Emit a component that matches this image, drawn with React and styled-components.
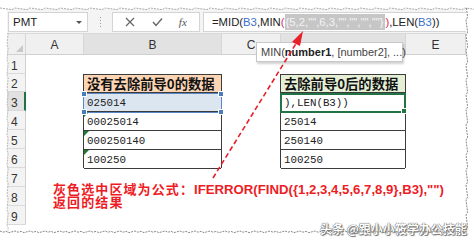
import React from "react";
import styled, { createGlobalStyle } from "styled-components";

const Global = createGlobalStyle`
  html, body { margin: 0; padding: 0; background: #fff; }
  #root { width: 474px; height: 242px; }
`;

const Frame = styled.div`
  position: relative;
  width: 474px;
  height: 242px;
  background: #fff;
  overflow: hidden;
  font-family: "Liberation Sans", Arial, sans-serif;
`;

const Sheet = styled.div`
  position: absolute;
  left: 7px;
  top: 9px;
  width: 459px;
  height: 222px;
  background: #fff;
  display: flex;
  flex-direction: column;
  overflow: hidden;
`;

const FormulaBar = styled.div`
  height: 24px;
  box-sizing: border-box;
  padding: 3px 0 1px 1px;
  display: flex;
  align-items: stretch;
  background: #f4f4f4;
`;

const NameBox = styled.div`
  width: 80px;
  box-sizing: border-box;
  border: 1px solid #d4d4d4;
  background: #fff;
  display: flex;
  align-items: center;
  justify-content: space-between;
  padding: 0 5px 0 4px;
  font-size: 11.5px;
  color: #222;
`;

const Caret = styled.span`
  width: 0;
  height: 0;
  border-left: 3px solid transparent;
  border-right: 3px solid transparent;
  border-top: 3px solid #555;
`;

const Grip = styled.div`
  width: 24px;
  display: flex;
  flex-direction: column;
  align-items: center;
  justify-content: center;
  gap: 2px;
  & > i {
    width: 1px;
    height: 1px;
    background: #999;
  }
`;

const Buttons = styled.div`
  width: 88px;
  box-sizing: border-box;
  border: 1px solid #d4d4d4;
  background: #fff;
  display: flex;
  align-items: center;
  justify-content: space-around;
  padding: 0 4px;
  color: #666;
`;

const Fx = styled.span`
  font-family: "Liberation Serif", serif;
  font-style: italic;
  font-size: 11px;
  color: #555;
`;

const FormulaInput = styled.div`
  flex: 1;
  margin-left: 3px;
  box-sizing: border-box;
  border: 1px solid #d4d4d4;
  border-right: none;
  background: #fff;
  display: flex;
  align-items: center;
  padding-left: 8px;
  font-size: 11.3px;
  white-space: pre;
  color: #222;
`;

const Tok = styled.span`
  color: ${(p) => p.$c || "#222"};
`;

const Hl = styled.span`
  background: #c6c6c6;
  color: #f4f4f4;
  padding: 2px 2px 2px 1px;
`;

const ColHeader = styled.div`
  display: grid;
  grid-template-columns: 19px 58px 138px 59px 125px 1fr;
  height: 22px;
  background: #f0f0f0;
  border-top: 1px solid #dadada;
  border-bottom: 1px solid #d0d0d0;
  box-sizing: border-box;
`;

const ColCell = styled.div`
  display: flex;
  align-items: flex-end;
  justify-content: center;
  padding-bottom: 2px;
  font-size: 12px;
  color: #333;
  border-right: 1px solid #d6d6d6;
  background: ${(p) => (p.$sel ? "#e2e2e2" : "transparent")};
  position: relative;
  &::after {
    content: "";
    position: absolute;
    right: 2px;
    bottom: 2px;
    border-left: 7px solid transparent;
    border-bottom: 7px solid ${(p) => (p.$corner ? "#c8c8c8" : "transparent")};
  }
`;

const Body = styled.div`
  flex: 1;
  display: grid;
  grid-template-columns: 19px 58px 138px 59px 125px 1fr;
  grid-template-rows: 19px 18px 19px 19px 19px 19px 19px 19px 19px 1fr;
`;

const RowHead = styled.div`
  grid-column: 1;
  grid-row: ${(p) => p.$r};
  background: ${(p) => (p.$sel ? "#e1e1e1" : "#f3f3f3")};
  border-bottom: 1px solid #dadada;
  border-right: ${(p) => (p.$sel ? "2px solid #217346" : "1px solid #d0d0d0")};
  box-sizing: border-box;
  display: flex;
  align-items: flex-end;
  padding: 0 0 1px 4px;
  font-size: 12px;
  line-height: 12px;
  color: #333;
`;

const Table = styled.div`
  grid-column: ${(p) => p.$col};
  grid-row: 2 / 7;
  display: grid;
  grid-template-rows: 18px 19px 19px 19px 19px;
  border: 1px solid #3c3c3c;
  border-bottom: none;
  margin-left: -1px;
  position: relative;
`;

const HeadCell = styled.div`
  background: ${(p) => p.$bg};
  border-bottom: 1px solid #3c3c3c;
  display: flex;
  align-items: center;
  padding-left: 3px;
  font-family: "Noto Sans CJK SC", sans-serif;
  font-weight: 700;
  font-size: 13.3px;
  line-height: 1;
  color: #111;
  white-space: nowrap;
  overflow: hidden;
`;

const Cell = styled.div`
  position: relative;
  background: ${(p) => (p.$sel ? "#dce6f1" : "#fff")};
  border-bottom: 1px solid #3c3c3c;
  display: flex;
  align-items: flex-end;
  padding: 0 0 2px 3px;
  font-family: "Liberation Mono", monospace;
  font-size: 10.8px;
  color: #222;
  white-space: nowrap;
  &::before {
    content: "";
    position: absolute;
    left: 0;
    top: 0;
    border-top: 5px solid ${(p) => (p.$flag ? "#1e7b34" : "transparent")};
    border-right: 5px solid transparent;
  }
`;

const SelBox = styled.div`
  position: absolute;
  left: -1px;
  right: -1px;
  top: 18px;
  height: 20px;
  box-sizing: border-box;
  border: ${(p) => (p.$green ? "2px solid #217346" : "1px solid #5b87c5")};
  pointer-events: none;
`;

const Handle = styled.span`
  position: absolute;
  width: 4px;
  height: 4px;
  background: ${(p) => p.$c};
  border: 1px solid #fff;
  ${(p) => p.$pos}
`;

const Note = styled.div`
  grid-column: 2 / 7;
  grid-row: 7 / 10;
  align-self: start;
  padding: 14px 0 0 27px;
  color: #ee1c25;
  font-family: "Noto Sans CJK SC", sans-serif;
  font-weight: 700;
  font-size: 13px;
  letter-spacing: 1.1px;
  white-space: nowrap;
`;

const NoteLine = styled.div`
  height: 13px;
  line-height: 13px;
`;

const Latin = styled.span`
  font-family: "Liberation Sans", Arial, sans-serif;
  font-size: 13.2px;
  letter-spacing: 0;
`;

const Tooltip = styled.div`
  position: absolute;
  left: 256px;
  top: 42px;
  width: 147px;
  height: 20px;
  box-sizing: border-box;
  background: #fff;
  border: 1px solid #c8c8c8;
  box-shadow: 1px 2px 2px rgba(0, 0, 0, 0.18);
  display: flex;
  align-items: center;
  padding-left: 4px;
  font-size: 11px;
  color: #444;
  white-space: pre;
  & b {
    color: #222;
  }
`;

const Watermark = styled.div`
  position: absolute;
  left: 320px;
  top: 220px;
  font-family: "Noto Sans CJK SC", sans-serif;
  font-size: 12px;
  font-weight: 700;
  color: #fff;
  white-space: pre;
  text-shadow: 0 0 1px #555, 0 0 1px #555, 1px 1px 1px #777;
`;

const Overlay = styled.svg`
  position: absolute;
  left: 0;
  top: 0;
  pointer-events: none;
`;

function TornEdges() {
  const top = [];
  for (let x = 0; x <= 474; x += 3) top.push(`${x},${8 + ((x * 7) % 5) * 0.4}`);
  const bottom = [];
  for (let x = 0; x <= 466; x += 3) bottom.push(`${x},${231 + ((x * 11) % 5) * 0.4}`);
  const right = [];
  for (let y = 8; y <= 232; y += 3) right.push(`${466 + ((y * 7) % 5) * 0.4},${y}`);
  const left = [];
  for (let y = 33; y <= 232; y += 3) left.push(`${7 + ((y * 13) % 5) * 0.3},${y}`);
  return (
    <Overlay width="474" height="242">
      <polyline points={top.join(" ")} fill="none" stroke="#aaa" strokeWidth="1" strokeDasharray="2 1" />
      <polyline points={bottom.join(" ")} fill="none" stroke="#888" strokeWidth="1" strokeDasharray="2 1" />
      <polyline points={right.join(" ")} fill="none" stroke="#888" strokeWidth="1" strokeDasharray="2 1" />
      <polyline points={left.join(" ")} fill="none" stroke="#bbb" strokeWidth="1" strokeDasharray="2 1" />
    </Overlay>
  );
}

function Arrow() {
  return (
    <Overlay width="474" height="242">
      <line x1="213" y1="178" x2="297" y2="42" stroke="#e8202a" strokeWidth="1.6" strokeDasharray="5 3" />
      <polygon points="303,31 292,42 300,46" fill="#e8202a" />
    </Overlay>
  );
}

const rows = [1, 2, 3, 4, 5, 6, 7, 8, 9];

export default function App() {
  const hTopLeft = "left:-3px; top:-3px;";
  const hBotLeft = "left:-3px; bottom:-3px;";
  const hTopRight = "right:-3px; top:-3px;";
  const hBotRight = "right:-3px; bottom:-3px;";
  return (
    <>
      <Global />
      <Frame>
        <Sheet>
          <FormulaBar>
            <NameBox>
              <span>PMT</span>
              <Caret />
            </NameBox>
            <Grip>
              <i />
              <i />
              <i />
              <i />
            </Grip>
            <Buttons>
              <svg width="10" height="10" viewBox="0 0 10 10">
                <path d="M1 1 L9 9 M9 1 L1 9" stroke="#666" strokeWidth="1.2" />
              </svg>
              <svg width="11" height="10" viewBox="0 0 11 10">
                <path d="M1 5 L4 8.5 L10 1.5" stroke="#666" strokeWidth="1.4" fill="none" />
              </svg>
              <Fx>fx</Fx>
            </Buttons>
            <FormulaInput>
              <Tok>=MID(</Tok>
              <Tok $c="#3b6fc4">B3</Tok>
              <Tok>,MIN</Tok>
              <Tok $c="#d0306a">(</Tok>
              <Hl>{'{5,2,"",6,3,"","","",""}'}</Hl>
              <Tok $c="#d0306a">)</Tok>
              <Tok>,LEN(</Tok>
              <Tok $c="#3b6fc4">B3</Tok>
              <Tok>))</Tok>
            </FormulaInput>
          </FormulaBar>
          <ColHeader>
            <ColCell $corner />
            <ColCell>A</ColCell>
            <ColCell $sel>B</ColCell>
            <ColCell>C</ColCell>
            <ColCell $sel />
            <ColCell>E</ColCell>
          </ColHeader>
          <Body>
            {rows.map((r) => (
              <RowHead key={r} $r={r} $sel={r === 3}>
                {r}
              </RowHead>
            ))}
            <Table $col={3}>
              <HeadCell $bg="#fcd5b4">没有去除前导0的数据</HeadCell>
              <Cell $sel>025014</Cell>
              <Cell $flag>00025014</Cell>
              <Cell $flag>000250140</Cell>
              <Cell $flag>100250</Cell>
              <SelBox>
                <Handle $c="#4a7ebb" $pos={hTopLeft} />
                <Handle $c="#4a7ebb" $pos={hBotLeft} />
                <Handle $c="#4a7ebb" $pos={hTopRight} />
                <Handle $c="#4a7ebb" $pos={hBotRight} />
              </SelBox>
            </Table>
            <Table $col={5}>
              <HeadCell $bg="#e4efd6">去除前导0后的数据</HeadCell>
              <Cell>),LEN(B3))</Cell>
              <Cell>25014</Cell>
              <Cell>250140</Cell>
              <Cell>100250</Cell>
              <SelBox $green>
                <Handle $c="#217346" $pos={hBotRight} />
              </SelBox>
            </Table>
            <Note>
              <NoteLine>
                灰色选中区域为公式：<Latin>IFERROR(FIND({"{1,2,3,4,5,6,7,8,9}"},B3),"")</Latin>
              </NoteLine>
              <NoteLine>返回的结果</NoteLine>
            </Note>
          </Body>
        </Sheet>
        <Tooltip>
          MIN(<b>number1</b>, [number2], ...)
        </Tooltip>
        <Arrow />
        <Watermark>头条 @跟小小筱学办公技能</Watermark>
        <TornEdges />
      </Frame>
    </>
  );
}
